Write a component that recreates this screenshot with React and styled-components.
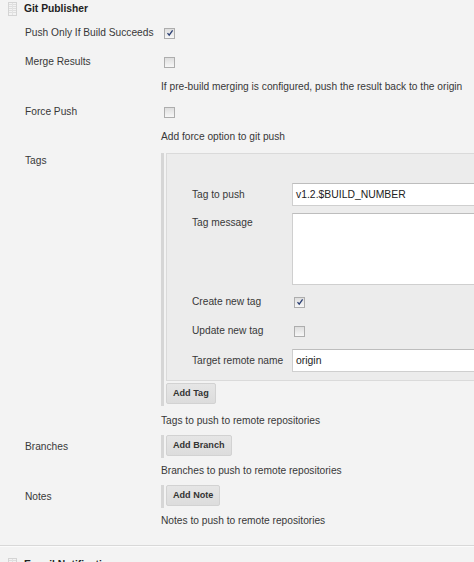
import React from 'react'
import styled, { createGlobalStyle } from 'styled-components'

var GlobalStyle = createGlobalStyle`
body {
  margin: 0;
  background: #f3f3f3;
  font-family: "Liberation Sans", Arial, sans-serif;
  font-size: 10.2px;
  color: #383838;
}
`

var Page = styled.div`
width: 474px;
height: 562px;
overflow: hidden;
background: #f3f3f3;
`

var Header = styled.div`
display: flex;
align-items: center;
height: 17px;
padding-left: 8px;
gap: 7px;
margin-top: ${p => p.$top || 0}px;
`

var Title = styled.div`
font-weight: bold;
font-size: 10.3px;
color: #222;
`

var Entry = styled.div`
display: flex;
align-items: ${p => p.$start ? 'flex-start' : 'center'};
min-height: ${p => p.$h || 26}px;
margin-top: ${p => p.$top || 0}px;
`

var Label = styled.div`
width: 136px;
padding-left: 25px;
flex-shrink: 0;
line-height: 16px;
`

var Control = styled.div`
flex: 1;
display: flex;
align-items: center;
`

var Desc = styled.div`
height: 24px;
line-height: 24px;
padding-left: 161px;
margin-top: ${p => p.$top || 0}px;
white-space: nowrap;
`

var Box = styled.span`
display: inline-flex;
align-items: center;
justify-content: center;
width: 9px;
height: 9px;
margin-left: ${p => p.$left || 3}px;
border: 1px solid #adadad;
background: linear-gradient(#dedede, #f7f7f7);
& > svg {
  width: 8px;
  height: 8px;
}
`

var Repeat = styled.div`
border-left: 3px solid #d6d6d6;
padding-left: 2px;
padding-bottom: 2px;
`

var Panel = styled.div`
width: 340px;
background: #ececec;
border: 1px solid #dadada;
padding: 29px 0 8px 25px;
margin-bottom: 2px;
`

var PanelRow = styled.div`
display: flex;
align-items: ${p => p.$start ? 'flex-start' : 'center'};
min-height: ${p => p.$h || 24}px;
margin-top: ${p => p.$top || 0}px;
`

var PanelLabel = styled.div`
width: 100px;
flex-shrink: 0;
padding-top: ${p => p.$pad || 0}px;
line-height: 12px;
`

var Field = styled.div`
width: 220px;
height: ${p => p.$h || 21}px;
background: #fff;
border: 1px solid #cfcfcf;
border-top-color: #bdbdbd;
padding-left: 3px;
line-height: 21px;
font-size: 10.4px;
color: #222;
`

var Button = styled.div`
display: inline-block;
height: ${p => p.$h || 19}px;
line-height: ${p => p.$h || 19}px;
padding: 0 6px;
background: linear-gradient(#e6e6e6, #dcdcdc);
border: 1px solid #d2d2d2;
border-radius: 2px;
font-weight: bold;
font-size: 9.1px;
color: #333;
`

var Divider = styled.div`
margin-top: 12px;
border-top: 1px solid #d8d8d8;
border-bottom: 1px solid #fbfbfb;
`

function Handle() {
  return (
    <svg width="9" height="14" viewBox="0 0 9 14">
      <rect x="0.5" y="0.5" width="8" height="13" fill="none" stroke="#d4d4d4" />
      {[2.5, 4.5, 6.5, 8.5, 10.5].map(y => (
        <line key={y} x1="1" x2="8" y1={y} y2={y} stroke="#dedede" />
      ))}
      <line x1="4.5" x2="4.5" y1="1" y2="13" stroke="#e2e2e2" />
    </svg>
  )
}

function Checkbox({ checked, left }) {
  return (
    <Box $left={left}>
      {checked && (
        <svg viewBox="0 0 8 8">
          <path d="M1.5 4.2 L3.2 6.2 L6.6 1.4" fill="none" stroke="#2b3f73" strokeWidth="1.3" />
        </svg>
      )}
    </Box>
  )
}

export default function App() {
  return (
    <Page>
      <GlobalStyle />
      <Header>
        <Handle />
        <Title>Git Publisher</Title>
      </Header>

      <Entry $top={3}>
        <Label>Push Only If Build Succeeds</Label>
        <Control><Checkbox checked /></Control>
      </Entry>
      <Entry $top={3}>
        <Label>Merge Results</Label>
        <Control><Checkbox /></Control>
      </Entry>
      <Desc>If pre-build merging is configured, push the result back to the origin</Desc>
      <Entry>
        <Label>Force Push</Label>
        <Control><Checkbox /></Control>
      </Entry>
      <Desc>Add force option to git push</Desc>

      <Entry $start $top={4}>
        <Label>Tags</Label>
        <Control>
          <Repeat>
            <Panel>
              <PanelRow $h={23}>
                <PanelLabel>Tag to push</PanelLabel>
                <Field>v1.2.$BUILD_NUMBER</Field>
              </PanelRow>
              <PanelRow $start $top={7}>
                <PanelLabel $pad={4}>Tag message</PanelLabel>
                <Field $h={70} />
              </PanelRow>
              <PanelRow $top={5}>
                <PanelLabel>Create new tag</PanelLabel>
                <Checkbox checked left={2} />
              </PanelRow>
              <PanelRow $top={5}>
                <PanelLabel>Update new tag</PanelLabel>
                <Checkbox left={2} />
              </PanelRow>
              <PanelRow $h={23} $top={6}>
                <PanelLabel>Target remote name</PanelLabel>
                <Field>origin</Field>
              </PanelRow>
            </Panel>
            <Button>Add Tag</Button>
          </Repeat>
        </Control>
      </Entry>
      <Desc $top={3}>Tags to push to remote repositories</Desc>

      <Entry $h={23} $top={2}>
        <Label>Branches</Label>
        <Control>
          <Repeat><Button>Add Branch</Button></Repeat>
        </Control>
      </Entry>
      <Desc $top={1}>Branches to push to remote repositories</Desc>

      <Entry $h={23} $top={2}>
        <Label>Notes</Label>
        <Control>
          <Repeat><Button>Add Note</Button></Repeat>
        </Control>
      </Entry>
      <Desc $top={1}>Notes to push to remote repositories</Desc>

      <Divider />
      <Header $top={9}>
        <Handle />
        <Title>E-mail Notification</Title>
      </Header>
    </Page>
  )
}
